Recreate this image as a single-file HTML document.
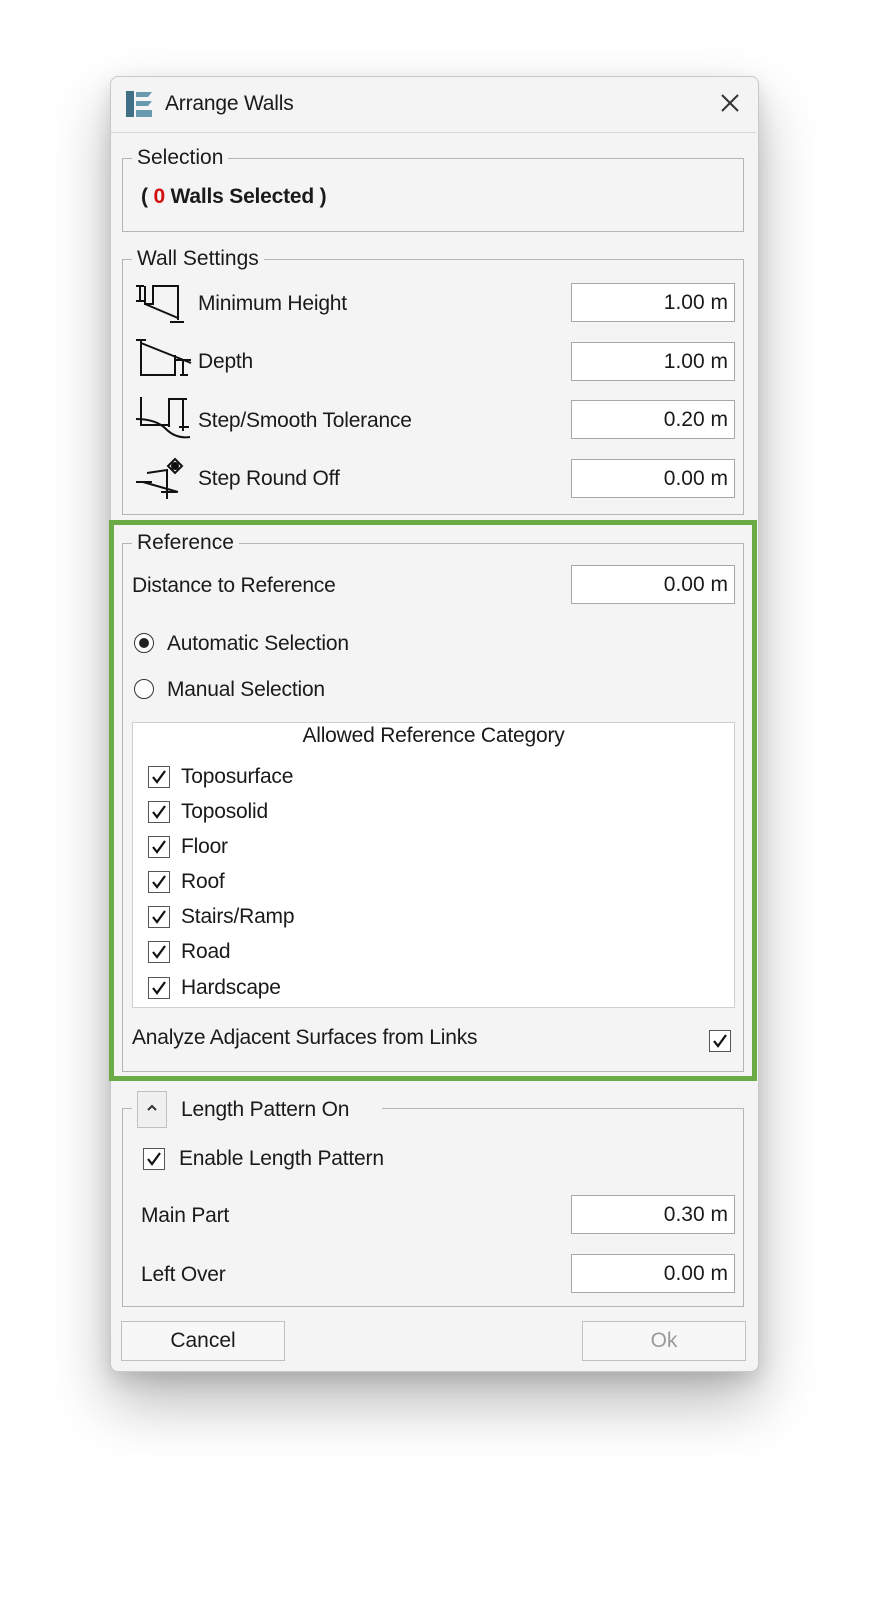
<!DOCTYPE html>
<html><head><meta charset="utf-8"><style>
body{margin:0;width:891px;height:1598px;background:#fff;position:relative;font-family:"Liberation Sans",sans-serif;color:#1a1a1a;overflow:hidden}
.a{position:absolute}
.dlg{left:110px;top:76px;width:647px;height:1294px;background:#f4f4f4;border:1px solid #c8c8c8;border-radius:8px;box-shadow:0 30px 60px rgba(0,0,0,.28),0 8px 20px rgba(0,0,0,.12)}
.fs{border:1px solid #b5b5b5;box-sizing:border-box}
.lg{background:#f4f4f4;padding:0 5px;font-size:21px;line-height:22px}
.t{font-size:21px;line-height:22px;letter-spacing:-0.2px}
.in{background:#fff;border:1px solid #a8a8a8;box-sizing:border-box;width:164px;height:39px;left:571px;text-align:right;padding-right:6px;font-size:21px;line-height:37px}
.cb{width:22px;height:22px;border:1px solid #555;background:#fff;box-sizing:border-box}
.cb svg{position:absolute;left:2px;top:2px}
.btn{border:1px solid #c0c0c0;background:#f7f7f7;box-sizing:border-box;text-align:center;font-size:21px;line-height:38px;height:40px}
</style></head><body>
<div class="a dlg"></div>
<svg class="a" style="left:124px;top:89px" width="30" height="30" viewBox="0 0 30 30"><path d="M2 2h8v26H2z" fill="#3f7086"/><path d="M12 3h16l-4 5H12zM12 12h16l-4 5H12zM12 21h16v7H12z" fill="#6a9aad"/></svg>
<div class="a t" style="left:165px;top:93px">Arrange Walls</div>
<svg class="a" style="left:720px;top:93px" width="20" height="20"><path d="M2 2L18 18M18 2L2 18" stroke="#333" stroke-width="2"/></svg>
<div class="a" style="left:111px;top:132px;width:645px;height:1px;background:#d8d8d8"></div>
<div class="a fs" style="left:122px;top:158px;width:622px;height:74px"></div>
<div class="a lg" style="left:132px;top:147px">Selection</div>
<div class="a t" style="left:141px;top:186px;font-weight:bold">( <span style="color:#d21010">0</span> Walls Selected )</div>
<div class="a fs" style="left:122px;top:259px;width:622px;height:256px"></div>
<div class="a lg" style="left:132px;top:248px">Wall Settings</div>
<svg class="a" style="left:135px;top:283px" width="60" height="42" fill="none" stroke="#111" stroke-width="2"><path d="M1 3h8M1 18h8M5 3v15M10 3v18h8v-18h25v34M10 21l33 14M35 39h14"/></svg>
<div class="a t" style="left:198px;top:293px">Minimum Height</div>
<svg class="a" style="left:135px;top:338px" width="60" height="42" fill="none" stroke="#111" stroke-width="2"><path d="M1 2h10M6 2v35h34V17M6 5l50 20M40 22h16M48 22v15M45 37h8"/></svg>
<div class="a t" style="left:198px;top:351px">Depth</div>
<svg class="a" style="left:135px;top:397px" width="60" height="44" fill="none" stroke="#111" stroke-width="2"><path d="M6 0v28h28V2h18M34 2v28M48 2v32M1 22q20 0 30 10t24 8M44 30h10"/></svg>
<div class="a t" style="left:198px;top:410px">Step/Smooth Tolerance</div>
<svg class="a" style="left:135px;top:455px" width="60" height="44" fill="none" stroke="#111" stroke-width="2"><path d="M1 27h16M12 18l20-3v30M8 27l35 10M26 37h16M40 4l7 7-7 7-7-7z"/><circle cx="40" cy="11" r="3" fill="#111"/></svg>
<div class="a t" style="left:198px;top:468px">Step Round Off</div>
<div class="a in" style="top:283px">1.00 m</div>
<div class="a in" style="top:342px">1.00 m</div>
<div class="a in" style="top:400px">0.20 m</div>
<div class="a in" style="top:459px">0.00 m</div>
<div class="a" style="left:109px;top:520px;width:648px;height:561px;border:5px solid #6aab45;box-sizing:border-box"></div>
<div class="a fs" style="left:122px;top:543px;width:622px;height:529px"></div>
<div class="a lg" style="left:132px;top:532px">Reference</div>
<div class="a t" style="left:132px;top:575px">Distance to Reference</div>
<div class="a in" style="top:565px">0.00 m</div>
<div class="a" style="left:134px;top:633px;width:20px;height:20px;border:1px solid #333;border-radius:50%;box-sizing:border-box;background:#fff"><div class="a" style="left:4px;top:4px;width:10px;height:10px;border-radius:50%;background:#222"></div></div>
<div class="a t" style="left:167px;top:633px">Automatic Selection</div>
<div class="a" style="left:134px;top:679px;width:20px;height:20px;border:1px solid #333;border-radius:50%;box-sizing:border-box;background:#fff"></div>
<div class="a t" style="left:167px;top:679px">Manual Selection</div>
<div class="a" style="left:132px;top:722px;width:603px;height:286px;background:#fff;border:1px solid #d0d0d0;box-sizing:border-box"></div>
<div class="a t" style="left:132px;top:725px;width:603px;text-align:center">Allowed Reference Category</div>
<div class="a t" style="left:132px;top:1027px">Analyze Adjacent Surfaces from Links</div>
<div class="a cb" style="left:709px;top:1030px"><svg width="16" height="16"><path d="M2 8l4 5 8-11" stroke="#111" stroke-width="2.2" fill="none"/></svg></div>
<div class="a fs" style="left:122px;top:1108px;width:622px;height:199px"></div>
<div class="a" style="left:132px;top:1094px;width:250px;height:30px;background:#f4f4f4"></div>
<div class="a" style="left:137px;top:1091px;width:30px;height:37px;border:1px solid #c0c0c0;box-sizing:border-box;background:#f0f0f0"><svg class="a" style="left:8px;top:12px" width="12" height="8"><path d="M2 6l4-4 4 4" stroke="#333" stroke-width="2" fill="none"/></svg></div>
<div class="a t" style="left:181px;top:1099px">Length Pattern On</div>
<div class="a cb" style="left:143px;top:1148px"><svg width="16" height="16"><path d="M2 8l4 5 8-11" stroke="#111" stroke-width="2.2" fill="none"/></svg></div>
<div class="a t" style="left:179px;top:1148px">Enable Length Pattern</div>
<div class="a t" style="left:141px;top:1205px">Main Part</div>
<div class="a in" style="top:1195px">0.30 m</div>
<div class="a t" style="left:141px;top:1264px">Left Over</div>
<div class="a in" style="top:1254px">0.00 m</div>
<div class="a btn" style="left:121px;top:1321px;width:164px">Cancel</div>
<div class="a btn" style="left:582px;top:1321px;width:164px;color:#9a9a9a">Ok</div>
<div class="a cb" style="left:148px;top:766px"><svg width="16" height="16"><path d="M2 8l4 5 8-11" stroke="#111" stroke-width="2.2" fill="none"/></svg></div><div class="a t" style="left:181px;top:766px">Toposurface</div>
<div class="a cb" style="left:148px;top:801px"><svg width="16" height="16"><path d="M2 8l4 5 8-11" stroke="#111" stroke-width="2.2" fill="none"/></svg></div><div class="a t" style="left:181px;top:801px">Toposolid</div>
<div class="a cb" style="left:148px;top:836px"><svg width="16" height="16"><path d="M2 8l4 5 8-11" stroke="#111" stroke-width="2.2" fill="none"/></svg></div><div class="a t" style="left:181px;top:836px">Floor</div>
<div class="a cb" style="left:148px;top:871px"><svg width="16" height="16"><path d="M2 8l4 5 8-11" stroke="#111" stroke-width="2.2" fill="none"/></svg></div><div class="a t" style="left:181px;top:871px">Roof</div>
<div class="a cb" style="left:148px;top:906px"><svg width="16" height="16"><path d="M2 8l4 5 8-11" stroke="#111" stroke-width="2.2" fill="none"/></svg></div><div class="a t" style="left:181px;top:906px">Stairs/Ramp</div>
<div class="a cb" style="left:148px;top:941px"><svg width="16" height="16"><path d="M2 8l4 5 8-11" stroke="#111" stroke-width="2.2" fill="none"/></svg></div><div class="a t" style="left:181px;top:941px">Road</div>
<div class="a cb" style="left:148px;top:977px"><svg width="16" height="16"><path d="M2 8l4 5 8-11" stroke="#111" stroke-width="2.2" fill="none"/></svg></div><div class="a t" style="left:181px;top:977px">Hardscape</div>
</body></html>
